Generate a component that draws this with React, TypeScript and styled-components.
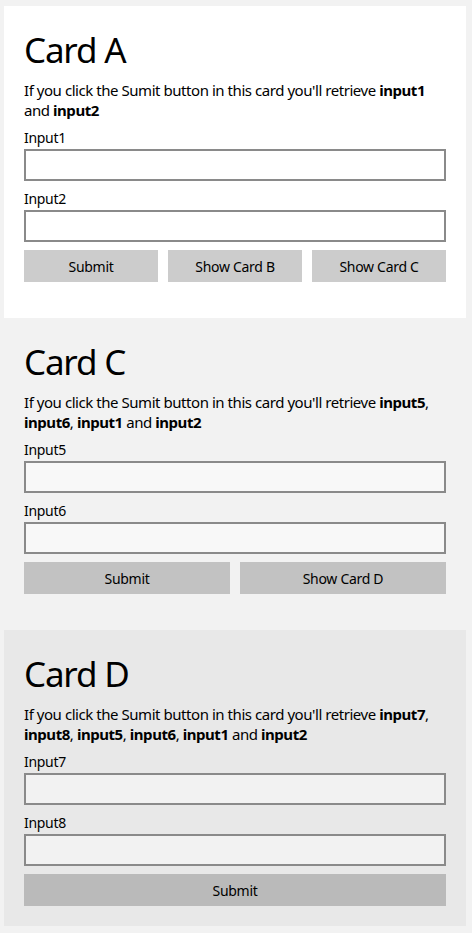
import styled, { createGlobalStyle } from 'styled-components';

const GlobalStyle = createGlobalStyle`
  html, body {
    margin: 0;
    padding: 0;
    background: #f2f2f2;
  }
  body {
    font-family: "Noto Sans", "Open Sans", sans-serif;
    color: #000000;
  }
  * {
    box-sizing: border-box;
  }
`;

const Page = styled.div`
  display: flex;
  flex-direction: column;
  padding: 6px 6px 7px 4px;
`;

const CardBox = styled.section<{ $bg: string; $bottom: number }>`
  display: flex;
  flex-direction: column;
  background: ${(p) => p.$bg};
  padding: 20px 20px ${(p) => p.$bottom}px;
`;

const Title = styled.h1`
  margin: 0;
  font-size: 35px;
  line-height: 48px;
  font-weight: 400;
  letter-spacing: -1.2px;
`;

const Text = styled.p`
  margin: 6px 0 0;
  font-size: 15px;
  line-height: 20px;
  letter-spacing: -0.45px;
`;

const Field = styled.div`
  display: flex;
  flex-direction: column;
  margin-top: 8px;
`;

const Label = styled.label`
  font-size: 14px;
  line-height: 19px;
  margin-bottom: 2px;
  letter-spacing: -0.3px;
`;

const Input = styled.input<{ $bg: string }>`
  height: 32px;
  width: 100%;
  margin: 0;
  border: 2px solid #8a8a8a;
  border-radius: 0;
  background: ${(p) => p.$bg};
  font: inherit;
  font-size: 14px;
  padding: 0 8px;
  outline: none;
`;

const Actions = styled.div<{ $cols: number }>`
  display: grid;
  grid-template-columns: repeat(${(p) => p.$cols}, 1fr);
  gap: 10px;
  margin-top: 8px;
`;

const Button = styled.button<{ $bg: string }>`
  height: 32px;
  border: none;
  border-radius: 0;
  background: ${(p) => p.$bg};
  color: #000000;
  font-family: inherit;
  font-size: 14px;
  letter-spacing: -0.3px;
  padding: 0 8px;
  cursor: pointer;
`;

interface Theme {
  card: string;
  input: string;
  button: string;
}

interface CardProps {
  title: string;
  fields: string[];
  actions: string[];
  theme: Theme;
  bottom: number;
  children: React.ReactNode;
}

const Card = ({ title, fields, actions, theme, bottom, children }: CardProps) => (
  <CardBox $bg={theme.card} $bottom={bottom}>
    <Title>{title}</Title>
    <Text>{children}</Text>
    {fields.map((f) => (
      <Field key={f}>
        <Label>{f}</Label>
        <Input $bg={theme.input} />
      </Field>
    ))}
    <Actions $cols={actions.length}>
      {actions.map((a) => (
        <Button key={a} $bg={theme.button}>
          {a}
        </Button>
      ))}
    </Actions>
  </CardBox>
);

const A: Theme = { card: '#ffffff', input: '#ffffff', button: '#cccccc' };
const C: Theme = { card: '#f2f2f2', input: '#f8f8f8', button: '#c2c2c2' };
const D: Theme = { card: '#e8e8e8', input: '#f2f2f2', button: '#bababa' };

export default function App() {
  return (
    <>
      <GlobalStyle />
      <Page>
        <Card
          title="Card A"
          fields={['Input1', 'Input2']}
          actions={['Submit', 'Show Card B', 'Show Card C']}
          theme={A}
          bottom={36}
        >
          If you click the Sumit button in this card you'll retrieve <b>input1</b> and{' '}
          <b>input2</b>
        </Card>
        <Card
          title="Card C"
          fields={['Input5', 'Input6']}
          actions={['Submit', 'Show Card D']}
          theme={C}
          bottom={36}
        >
          If you click the Sumit button in this card you'll retrieve <b>input5</b>,{' '}
          <b>input6</b>, <b>input1</b> and <b>input2</b>
        </Card>
        <Card
          title="Card D"
          fields={['Input7', 'Input8']}
          actions={['Submit']}
          theme={D}
          bottom={20}
        >
          If you click the Sumit button in this card you'll retrieve <b>input7</b>,{' '}
          <b>input8</b>, <b>input5</b>, <b>input6</b>, <b>input1</b> and <b>input2</b>
        </Card>
      </Page>
    </>
  );
}
